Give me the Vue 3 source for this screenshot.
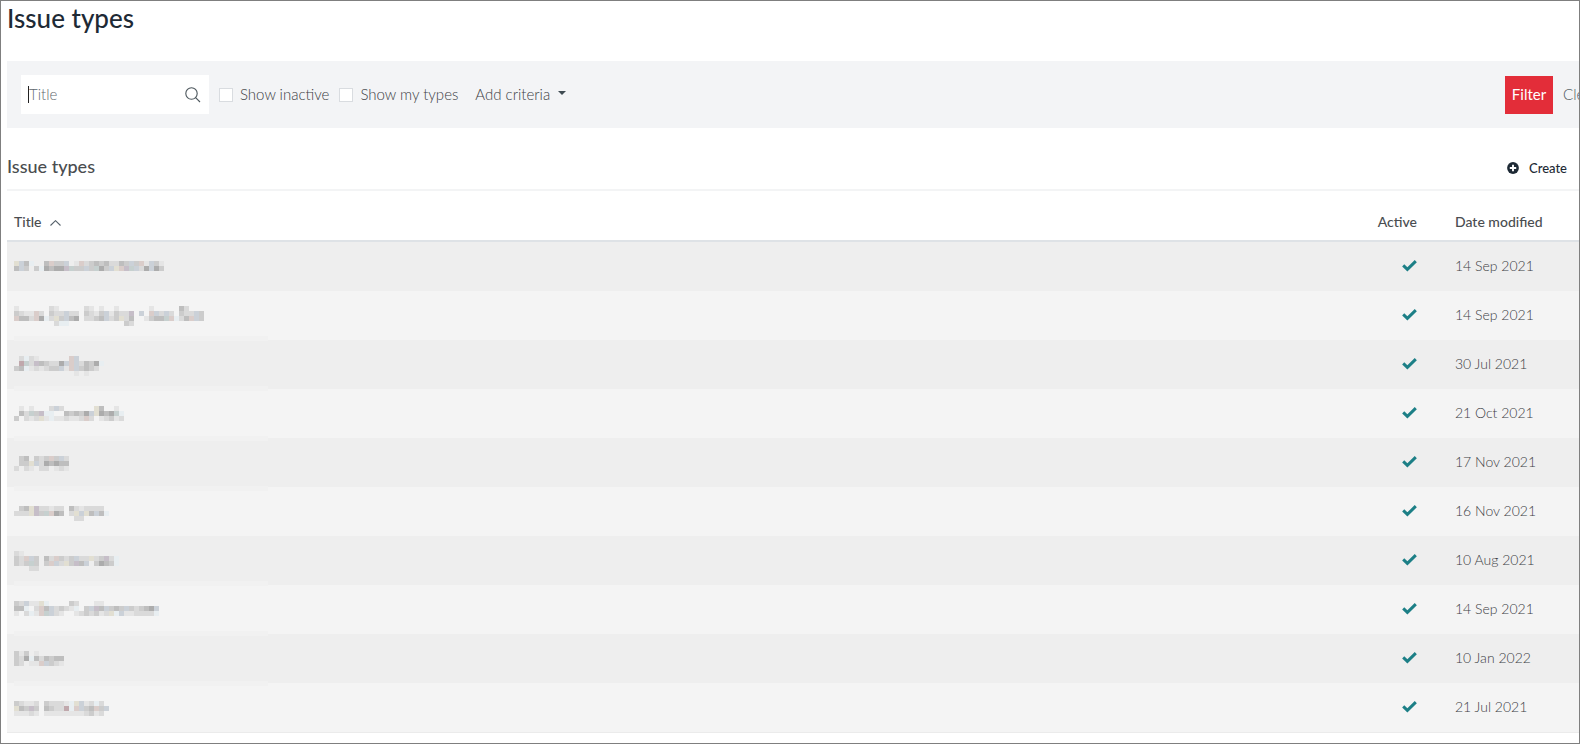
<script setup>
import { ref } from 'vue'

const tones = {
  a: '#e5e5e5', b: '#dadada', c: '#cccccc', d: '#bebebe', e: '#acacac',
  r: '#dacdca', s: '#cbd1d8', y: '#e2dfd2', g: '#c6d0cf', w: '#e8eef1',
  v: '#c6bec8', m: '#c0a8ac'
}

// Masked titles: each character is one 5px block, keyed by tone.
const rows = [
  { top: 19, date: '14 Sep 2021', mask: [
    'ysdw..drccs.arbcdcdbbdcscrasca',
    'dsc.cwedeevgccscgecsyrvgsbesec'] },
  { top: 15, date: '14 Sep 2021', mask: [
    'a......ba.....ba.a..a......a.....db...',
    'cbaarb.cbbsbb.cbacsacbbv.s.rsbsb.cbbsc',
    'rddbrewbycsde.bbcdsbcybd..acddgrwbdrsc',
    '........bww...........cb..............'] },
  { top: 16, date: '30 Jul 2021', mask: [
    '.bwba......rs.....',
    '.mgbvdcbbesrsbdcew',
    'cdwababccsarscdcb.',
    '............a.a...'] },
  { top: 17, date: '21 Oct 2021', mask: [
    '.a.a...bsb......yd..a.',
    '.dbgcvww..dcdcesyedegw',
    'c.babyawaabaabrb.abcab'] },
  { top: 18, date: '17 Nov 2021', mask: [
    '.cd.cbcrcsb',
    '.ccysbededd',
    'b.ba.bb.aba'] },
  { top: 19, date: '16 Nov 2021', mask: [
    '.cdyvbbabb.dbabbbb.',
    'bbbyvcgred.bysydsdw',
    '............bb.....'] },
  { top: 15, date: '10 Aug 2021', mask: [
    'ba...................',
    'cbrsc.dbrcbcsbbybcvbw',
    'cbcgc.crsbycvds.cedcw',
    '...bb................'] },
  { top: 16, date: '14 Sep 2021', mask: [
    'cbsaayw....cb...aa...........',
    'ddw.brdsbcbaw.csvdscdcscbcdes',
    'a.bwargsba..abcbcabywsaabbbbw'] },
  { top: 17, date: '10 Jan 2022', mask: [
    'cac.a.....',
    'cbewdbdcdd',
    'cb.aarscba'] },
  { top: 18, date: '21 Jul 2021', mask: [
    'cbaab.cbbbawysabwb.',
    'ydcvc.dcbbmwrscdrcs',
    'aaaba.aaaaaaaabcab.'] }
]

function blocks(row) {
  return row.mask.flatMap((line, y) =>
    [...line].map((tone, x) => ({ x: x * 5, y: row.top + y * 5, fill: tones[tone] }))
      .filter((b) => b.fill))
}

// Faint bands where the mask overlaps the boundary between two rows.
function seams(i) {
  const { top } = rows[i]
  const next = rows[i + 1]
  const list = []
  if (i > 1 && top > 15) list.push({ y: 0, h: top - 15 })
  if (next && i > 0 && next.top > 15) list.push({ y: 29 + next.top, h: 20 - next.top })
  return list
}

const title = ref('')
const inactive = ref(false)
const mine = ref(false)
</script>

<template>
  <main class="page">
    <h1>Issue types</h1>

    <form class="filters" @submit.prevent>
      <div class="search">
        <i class="caret"></i>
        <input id="title" v-model="title" type="text" placeholder="Title" aria-label="Title" />
        <svg width="16" height="16" viewBox="0 0 16 16" fill="none" stroke="#4c565c" stroke-width="1.1">
          <circle cx="6.5" cy="6.5" r="5.7" />
          <path d="M10.6 10.6 15 15" />
        </svg>
      </div>
      <label class="check"><input v-model="inactive" type="checkbox" /><span>Show inactive</span></label>
      <label class="check"><input v-model="mine" type="checkbox" /><span>Show my types</span></label>
      <button type="button" class="criteria">
        <span>Add criteria</span>
        <svg width="8" height="4" viewBox="0 0 8 4"><path d="M0 0h8L4 4z" fill="#3f4b52" /></svg>
      </button>
      <div class="actions">
        <button type="submit" class="apply">Filter</button>
        <button type="reset" class="clear">Clear</button>
      </div>
    </form>

    <header class="section">
      <h2>Issue types</h2>
      <button type="button" class="create">
        <svg width="12" height="12" viewBox="0 0 12 12">
          <circle cx="6" cy="6" r="5.9" fill="#1e2a35" />
          <path d="M6 2.8v6.4M2.8 6h6.4" stroke="#fff" stroke-width="1.9" />
        </svg>
        Create
      </button>
    </header>

    <table>
      <thead>
        <tr>
          <th class="name">
            Title
            <svg width="11" height="6" viewBox="0 0 11 6" fill="none" stroke="#56616a" stroke-width="1.1">
              <path d="M.5 5.5l5-4.8 5 4.8" />
            </svg>
          </th>
          <th class="active">Active</th>
          <th class="date">Date modified</th>
        </tr>
      </thead>
      <tbody>
        <tr v-for="(row, i) in rows" :key="i">
          <td class="name">
            <svg class="mask" width="254" height="49" shape-rendering="crispEdges">
              <rect v-for="s in seams(i)" :key="'s' + s.y" x="0" :y="s.y" width="254" :height="s.h" fill="#f1f1f1" />
              <rect v-for="(b, k) in blocks(row)" :key="k" :x="b.x" :y="b.y" width="5" height="5" :fill="b.fill" />
            </svg>
          </td>
          <td class="active">
            <svg width="15" height="12" viewBox="0 0 15 12" fill="none" stroke="#1c7f86" stroke-width="3">
              <path d="M1.2 5.3l4.2 4L13.8 1.2" />
            </svg>
          </td>
          <td class="date">{{ row.date }}</td>
        </tr>
      </tbody>
    </table>
  </main>
</template>

<style>
body { margin: 0; background: #fff; }
</style>

<style scoped>
.page {
  box-sizing: border-box;
  min-height: 100vh;
  padding: 0 0 10px 6px;
  border: 1px solid #7f7f7f;
  overflow: hidden;
  font-family: Lato, "Liberation Sans", sans-serif;
  font-size: 15px;
  font-weight: 300;
  line-height: 20px;
  color: #3c4044;
}
h1 {
  margin: 0 0 26px;
  font-size: 26px;
  line-height: 34px;
  font-weight: 500;
  color: #1e2a35;
}
button {
  padding: 0;
  border: 0;
  background: none;
  font: inherit;
  color: inherit;
}
.filters {
  display: flex;
  align-items: center;
  height: 67px;
  padding-left: 14px;
  margin-right: -26px;
  background: #f3f4f6;
}
.search {
  display: flex;
  align-items: center;
  box-sizing: border-box;
  width: 188px;
  height: 39px;
  margin-right: 10px;
  padding: 0 8px 0 7px;
  background: #fff;
}
.caret {
  width: 1px;
  height: 17px;
  background: #222;
}
.search input {
  flex: 1;
  min-width: 0;
  padding: 0 0 2px;
  border: 0;
  outline: 0;
  background: none;
  font: inherit;
  color: #3c4044;
}
.search input::placeholder { color: #5f686e; opacity: 1; }
.check {
  display: flex;
  align-items: center;
  gap: 7px;
  margin-right: 10px;
  white-space: nowrap;
}
.check span, .criteria span { padding-bottom: 2px; }
.check input {
  appearance: none;
  box-sizing: border-box;
  width: 14px;
  height: 14px;
  margin: 0;
  border: 1px solid #d9dce0;
  background: #fff;
}
.check input:checked { background: #1c7f86; }
.criteria {
  display: flex;
  align-items: center;
  gap: 8px;
  margin-left: 7px;
  white-space: nowrap;
}
.criteria svg { margin-bottom: 3px; }
.actions {
  display: flex;
  align-items: center;
  gap: 10px;
  margin-left: auto;
}
.actions button { height: 38px; padding-bottom: 2px; }
.apply {
  width: 48px;
  background: #e32d39;
  color: #fff;
  font-weight: 400;
}
.clear { width: 42px; text-align: left; color: #4f585e; }
.section {
  display: flex;
  align-items: center;
  justify-content: space-between;
  height: 61px;
  padding-right: 12px;
  border-bottom: 2px solid #f3f4f5;
}
h2 {
  margin: 14px 0 0;
  font-size: 18px;
  line-height: 24px;
  font-weight: 500;
  color: #4a4d50;
}
.create {
  display: flex;
  align-items: center;
  gap: 10px;
  margin-top: 19px;
  font-size: 13px;
  font-weight: 500;
  color: #1e2a35;
}
table {
  width: 100%;
  table-layout: fixed;
  border-collapse: separate;
  border-spacing: 0;
  border-bottom: 1px solid #ebebeb;
}
th, td {
  box-sizing: border-box;
  padding: 0 0 0 7px;
  text-align: left;
}
th {
  height: 51px;
  padding-top: 12px;
  border-bottom: 2px solid #dee2e6;
  font-size: 14px;
  font-weight: 500;
  color: #4a4d50;
}
.name svg { margin-left: 5px; vertical-align: 1px; }
.name svg.mask { display: block; margin: 0; }
td { height: 49px; padding-bottom: 2px; }
td.name { padding-bottom: 0; }
tbody tr { background: #f4f4f4; }
tbody tr:nth-child(odd) { background: #eee; }
th.active, td.active { width: 80px; padding: 0 20px 2px 0; text-align: right; }
th.active { padding: 12px 20px 0 0; }
td.active svg { display: block; margin-left: auto; }
th.date, td.date { width: 142px; padding-left: 18px; }
td.date { font-size: 14px; }
</style>
